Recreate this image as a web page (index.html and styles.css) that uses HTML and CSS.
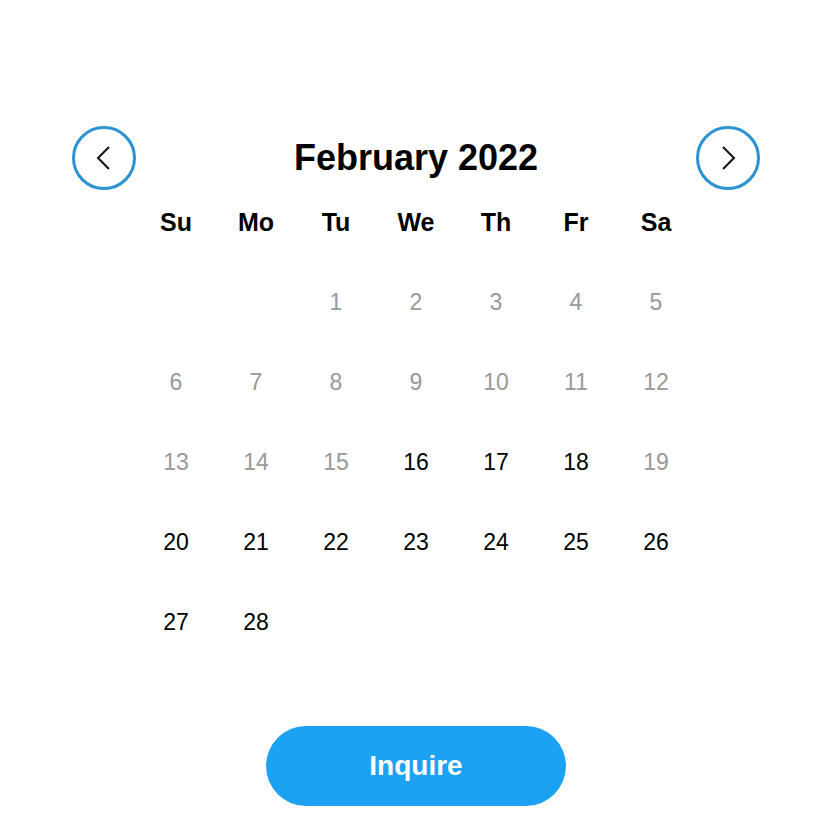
FILE: index.html
```html
<!DOCTYPE html>
<html>
<head>
<meta charset="utf-8">
<link rel="stylesheet" href="styles.css">
</head>
<body>
<div class="page">
  <div class="header">
    <button class="nav" aria-label="Previous month">
      <svg width="64" height="64" viewBox="0 0 64 64"><circle cx="32" cy="32" r="30.5" fill="none" stroke="#2b93d2" stroke-width="3"/><path d="M37 21 L26 32 L37 43" fill="none" stroke="#111" stroke-width="2"/></svg>
    </button>
    <div class="title">February 2022</div>
    <button class="nav" aria-label="Next month">
      <svg width="64" height="64" viewBox="0 0 64 64"><circle cx="32" cy="32" r="30.5" fill="none" stroke="#2b93d2" stroke-width="3"/><path d="M27 21 L38 32 L27 43" fill="none" stroke="#111" stroke-width="2"/></svg>
    </button>
  </div>
  <div class="grid">
    <div class="dow">Su</div><div class="dow">Mo</div><div class="dow">Tu</div><div class="dow">We</div><div class="dow">Th</div><div class="dow">Fr</div><div class="dow">Sa</div>
    <div class="day"></div><div class="day"></div><div class="day past">1</div><div class="day past">2</div><div class="day past">3</div><div class="day past">4</div><div class="day past">5</div>
    <div class="day past">6</div><div class="day past">7</div><div class="day past">8</div><div class="day past">9</div><div class="day past">10</div><div class="day past">11</div><div class="day past">12</div>
    <div class="day past">13</div><div class="day past">14</div><div class="day past">15</div><div class="day">16</div><div class="day">17</div><div class="day">18</div><div class="day past">19</div>
    <div class="day">20</div><div class="day">21</div><div class="day">22</div><div class="day">23</div><div class="day">24</div><div class="day">25</div><div class="day">26</div>
    <div class="day">27</div><div class="day">28</div>
  </div>
  <div class="actions">
    <button class="inquire">Inquire</button>
  </div>
</div>
</body>
</html>
```
FILE: styles.css
```css
html, body {
  margin: 0;
  padding: 0;
  background: #fff;
}
body {
  font-family: "Liberation Sans", Arial, sans-serif;
  color: #000;
}
.page {
  width: 832px;
  padding-top: 126px;
  display: flex;
  flex-direction: column;
  align-items: center;
}
.header {
  width: 688px;
  display: flex;
  align-items: center;
  justify-content: space-between;
  height: 64px;
}
.nav {
  width: 64px;
  height: 64px;
  padding: 0;
  border: none;
  background: none;
  display: block;
}
.nav svg { display: block; }
.title {
  font-size: 36px;
  font-weight: bold;
}
.grid {
  margin-top: -8px;
  display: grid;
  grid-template-columns: repeat(7, 80px);
  grid-auto-rows: 80px;
  width: 560px;
}
.dow {
  display: flex;
  align-items: center;
  justify-content: center;
  font-size: 25px;
  font-weight: bold;
}
.day {
  display: flex;
  align-items: center;
  justify-content: center;
  font-size: 23px;
}
.past { color: #999; }
.actions {
  margin-top: 64px;
}
.inquire {
  width: 300px;
  height: 80px;
  border: none;
  border-radius: 40px;
  background: #1da1f2;
  color: #fff;
  font-family: "Liberation Sans", Arial, sans-serif;
  font-size: 28px;
  font-weight: bold;
}
```
